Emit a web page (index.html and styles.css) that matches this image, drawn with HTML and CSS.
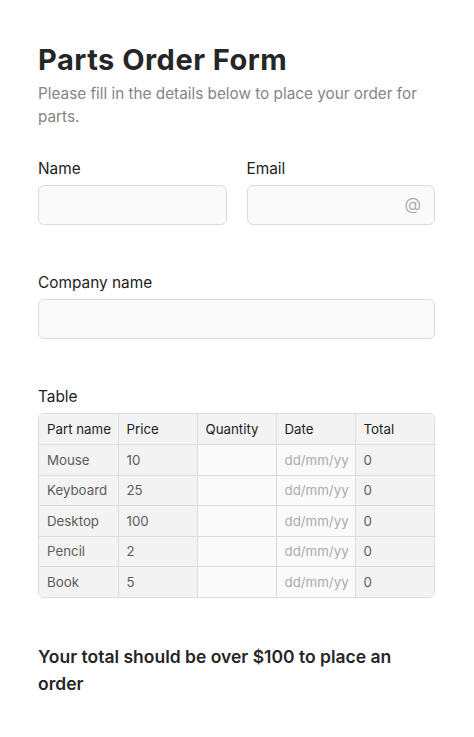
FILE: index.html
```html
<!DOCTYPE html>
<html lang="en">
<head>
  <meta charset="UTF-8" />
  <meta name="viewport" content="width=device-width, initial-scale=1.0"/>
  <title>Parts Order Form</title>
  <link rel="stylesheet" href="styles.css">
</head>
<body>
  <div class="form-page">
    <h1>Parts Order Form</h1>
    <p class="intro">Please fill in the details below to place your order for parts.</p>

    <form class="order-form">
      <div class="row two">
        <div class="field">
          <label for="name">Name</label>
          <input type="text" id="name"/>
        </div>
        <div class="field">
          <label for="email">Email</label>
          <div class="with-icon">
            <input type="email" id="email"/>
            <span class="icon">@</span>
          </div>
        </div>
      </div>

      <div class="field">
        <label for="company">Company name</label>
        <input type="text" id="company"/>
      </div>

      <div class="field">
        <label>Table</label>
        <div class="table-wrap">
          <table class="parts">
            <thead>
              <tr><th>Part name</th><th>Price</th><th>Quantity</th><th>Date</th><th>Total</th></tr>
            </thead>
            <tbody>
              <tr><td>Mouse</td><td>10</td><td class="edit"></td><td class="edit date">dd/mm/yy</td><td>0</td></tr>
              <tr><td>Keyboard</td><td>25</td><td class="edit"></td><td class="edit date">dd/mm/yy</td><td>0</td></tr>
              <tr><td>Desktop</td><td>100</td><td class="edit"></td><td class="edit date">dd/mm/yy</td><td>0</td></tr>
              <tr><td>Pencil</td><td>2</td><td class="edit"></td><td class="edit date">dd/mm/yy</td><td>0</td></tr>
              <tr><td>Book</td><td>5</td><td class="edit"></td><td class="edit date">dd/mm/yy</td><td>0</td></tr>
            </tbody>
          </table>
        </div>
      </div>

      <p class="note">Your total should be over $100 to place an order</p>
    </form>
  </div>
</body>
</html>
```

FILE: styles.css
```css
* { box-sizing: border-box; margin: 0; padding: 0; }
body { font-family: 'Inter', 'Noto Sans', sans-serif; color: #222; background: #fff; }

.form-page { padding: 40px 39px 0 38px; }
h1 { font-size: 29px; font-weight: 700; line-height: 40px; color: #262626; letter-spacing: 0.5px; }
.intro { font-size: 15.3px; line-height: 23px; color: #858585; margin-top: 2px; }

.order-form { display: flex; flex-direction: column; gap: 48px; margin-top: 31px; }
.row.two { display: grid; grid-template-columns: 1fr 1fr; gap: 20px; }
.field { display: flex; flex-direction: column; }
label { font-size: 15.4px; line-height: 20px; margin-bottom: 6px; color: #222; }
input { height: 40px; width: 100%; border: 1px solid #dcdcdc; border-radius: 6px; background: #fafafa; font-size: 15px; padding: 0 12px; }

.with-icon { position: relative; }
.with-icon input { padding-right: 36px; }
.with-icon .icon { position: absolute; right: 14px; top: 9px; font-size: 17px; line-height: 20px; color: #a0a0a0; font-weight: 300; }

.table-wrap { border: 1px solid #dcdcdc; border-radius: 6px; overflow: hidden; }
.parts { width: 100%; border-collapse: collapse; table-layout: fixed; font-size: 13.3px; }
.parts th, .parts td { height: 30.5px; padding: 0 8px; text-align: left; white-space: nowrap; border-right: 1px solid #dcdcdc; border-bottom: 1px solid #dcdcdc; background: #f3f3f3; }
.parts th:last-child, .parts td:last-child { border-right: none; }
.parts tbody tr:last-child td { border-bottom: none; }
.parts th { font-weight: 400; color: #222; }
.parts td { color: #5c5c5c; }
.parts td.edit { background: #fafafa; }
.parts td.date { color: #ababab; }

.note { font-size: 17.5px; font-weight: 600; line-height: 27px; color: #262626; margin-top: -3px; }
```
